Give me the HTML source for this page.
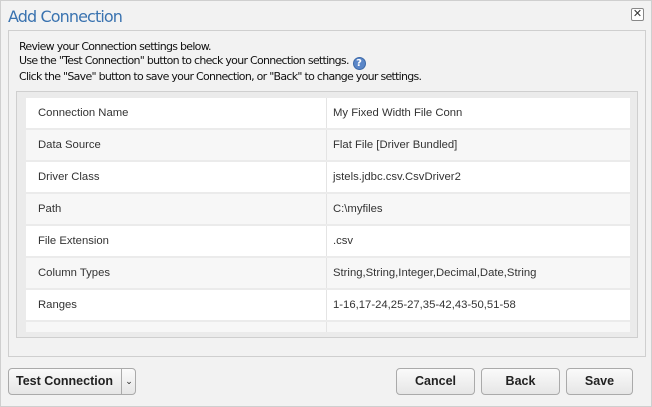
<!DOCTYPE html>
<html><head><style>
*{box-sizing:border-box;margin:0;padding:0}
body{width:652px;height:407px;background:#f2f2f2;font-family:"Liberation Sans",sans-serif;position:relative;overflow:hidden;border:1px solid #cfcfcf}
.title{position:absolute;left:7px;top:6px;font-size:16px;color:#3a73b0;font-family:"DejaVu Sans",sans-serif;font-weight:normal;letter-spacing:-0.9px}
.close{position:absolute;left:630px;top:7px;width:13px;height:13px;border:1px solid #888;border-radius:2px;background:#fff;font-size:11px;line-height:10px;text-align:center;color:#333}
.panel{position:absolute;left:7px;top:29px;width:638px;height:327px;border:1px solid #cfcfcf;background:#f2f2f2}
.intro{position:absolute;left:18px;top:39px;font-size:11px;line-height:13.5px;color:#111;font-family:"DejaVu Sans",sans-serif;letter-spacing:-0.72px}
.q{display:inline-block;width:13px;height:13px;border-radius:50%;background:#5a86c8;color:#fff;font-size:10px;line-height:12px;text-align:center;font-weight:bold;vertical-align:-2px;margin-left:1px;border:1px solid #3e6aa8;letter-spacing:0}
.frame{position:absolute;left:15px;top:90px;width:622px;height:247px;border:1px solid #cfcfcf;background:#ebebeb}
.rows{position:absolute;left:25px;top:97px;width:604px;height:234px;overflow:hidden}
.row{height:32px;border-bottom:2px solid #ebebeb;background:#fff;display:flex;font-size:11.3px;color:#333}
.row.g{background:#f7f7f7}
.row div{line-height:30px}
.c1{width:301px;padding-left:12px;border-right:1px solid #e4e4e4}
.c2{padding-left:6px}
.btn{position:absolute;top:367px;height:27px;border:1px solid #aaa;border-radius:4px;background:linear-gradient(#fafafa,#e6e6e6);font-size:12.5px;font-weight:bold;color:#222;text-align:center;line-height:25px}
</style></head><body>
<div class="title">Add Connection</div>
<div class="close">✕</div>
<div class="panel"></div>
<div class="intro">Review your Connection settings below.<br>Use the "Test Connection" button to check your Connection settings. <span class="q">?</span><br>Click the "Save" button to save your Connection, or "Back" to change your settings.</div>
<div class="frame"></div>
<div class="rows">
<div class="row"><div class="c1">Connection Name</div><div class="c2">My Fixed Width File Conn</div></div>
<div class="row g"><div class="c1">Data Source</div><div class="c2">Flat File [Driver Bundled]</div></div>
<div class="row"><div class="c1">Driver Class</div><div class="c2">jstels.jdbc.csv.CsvDriver2</div></div>
<div class="row g"><div class="c1">Path</div><div class="c2">C:\myfiles</div></div>
<div class="row"><div class="c1">File Extension</div><div class="c2">.csv</div></div>
<div class="row g"><div class="c1">Column Types</div><div class="c2">String,String,Integer,Decimal,Date,String</div></div>
<div class="row"><div class="c1">Ranges</div><div class="c2">1-16,17-24,25-27,35-42,43-50,51-58</div></div>
<div class="row g"><div class="c1"></div><div class="c2"></div></div>
</div>
<div class="btn" style="left:7px;width:128px;text-align:left;padding-left:7px">Test Connection<span style="position:absolute;left:112px;top:0;height:25px;border-left:1px solid #aaa;width:15px;text-align:center;font-size:9px;font-weight:normal">⌄</span></div>
<div class="btn" style="left:395px;width:79px">Cancel</div>
<div class="btn" style="left:480px;width:79px">Back</div>
<div class="btn" style="left:565px;width:67px">Save</div>
</body></html>
